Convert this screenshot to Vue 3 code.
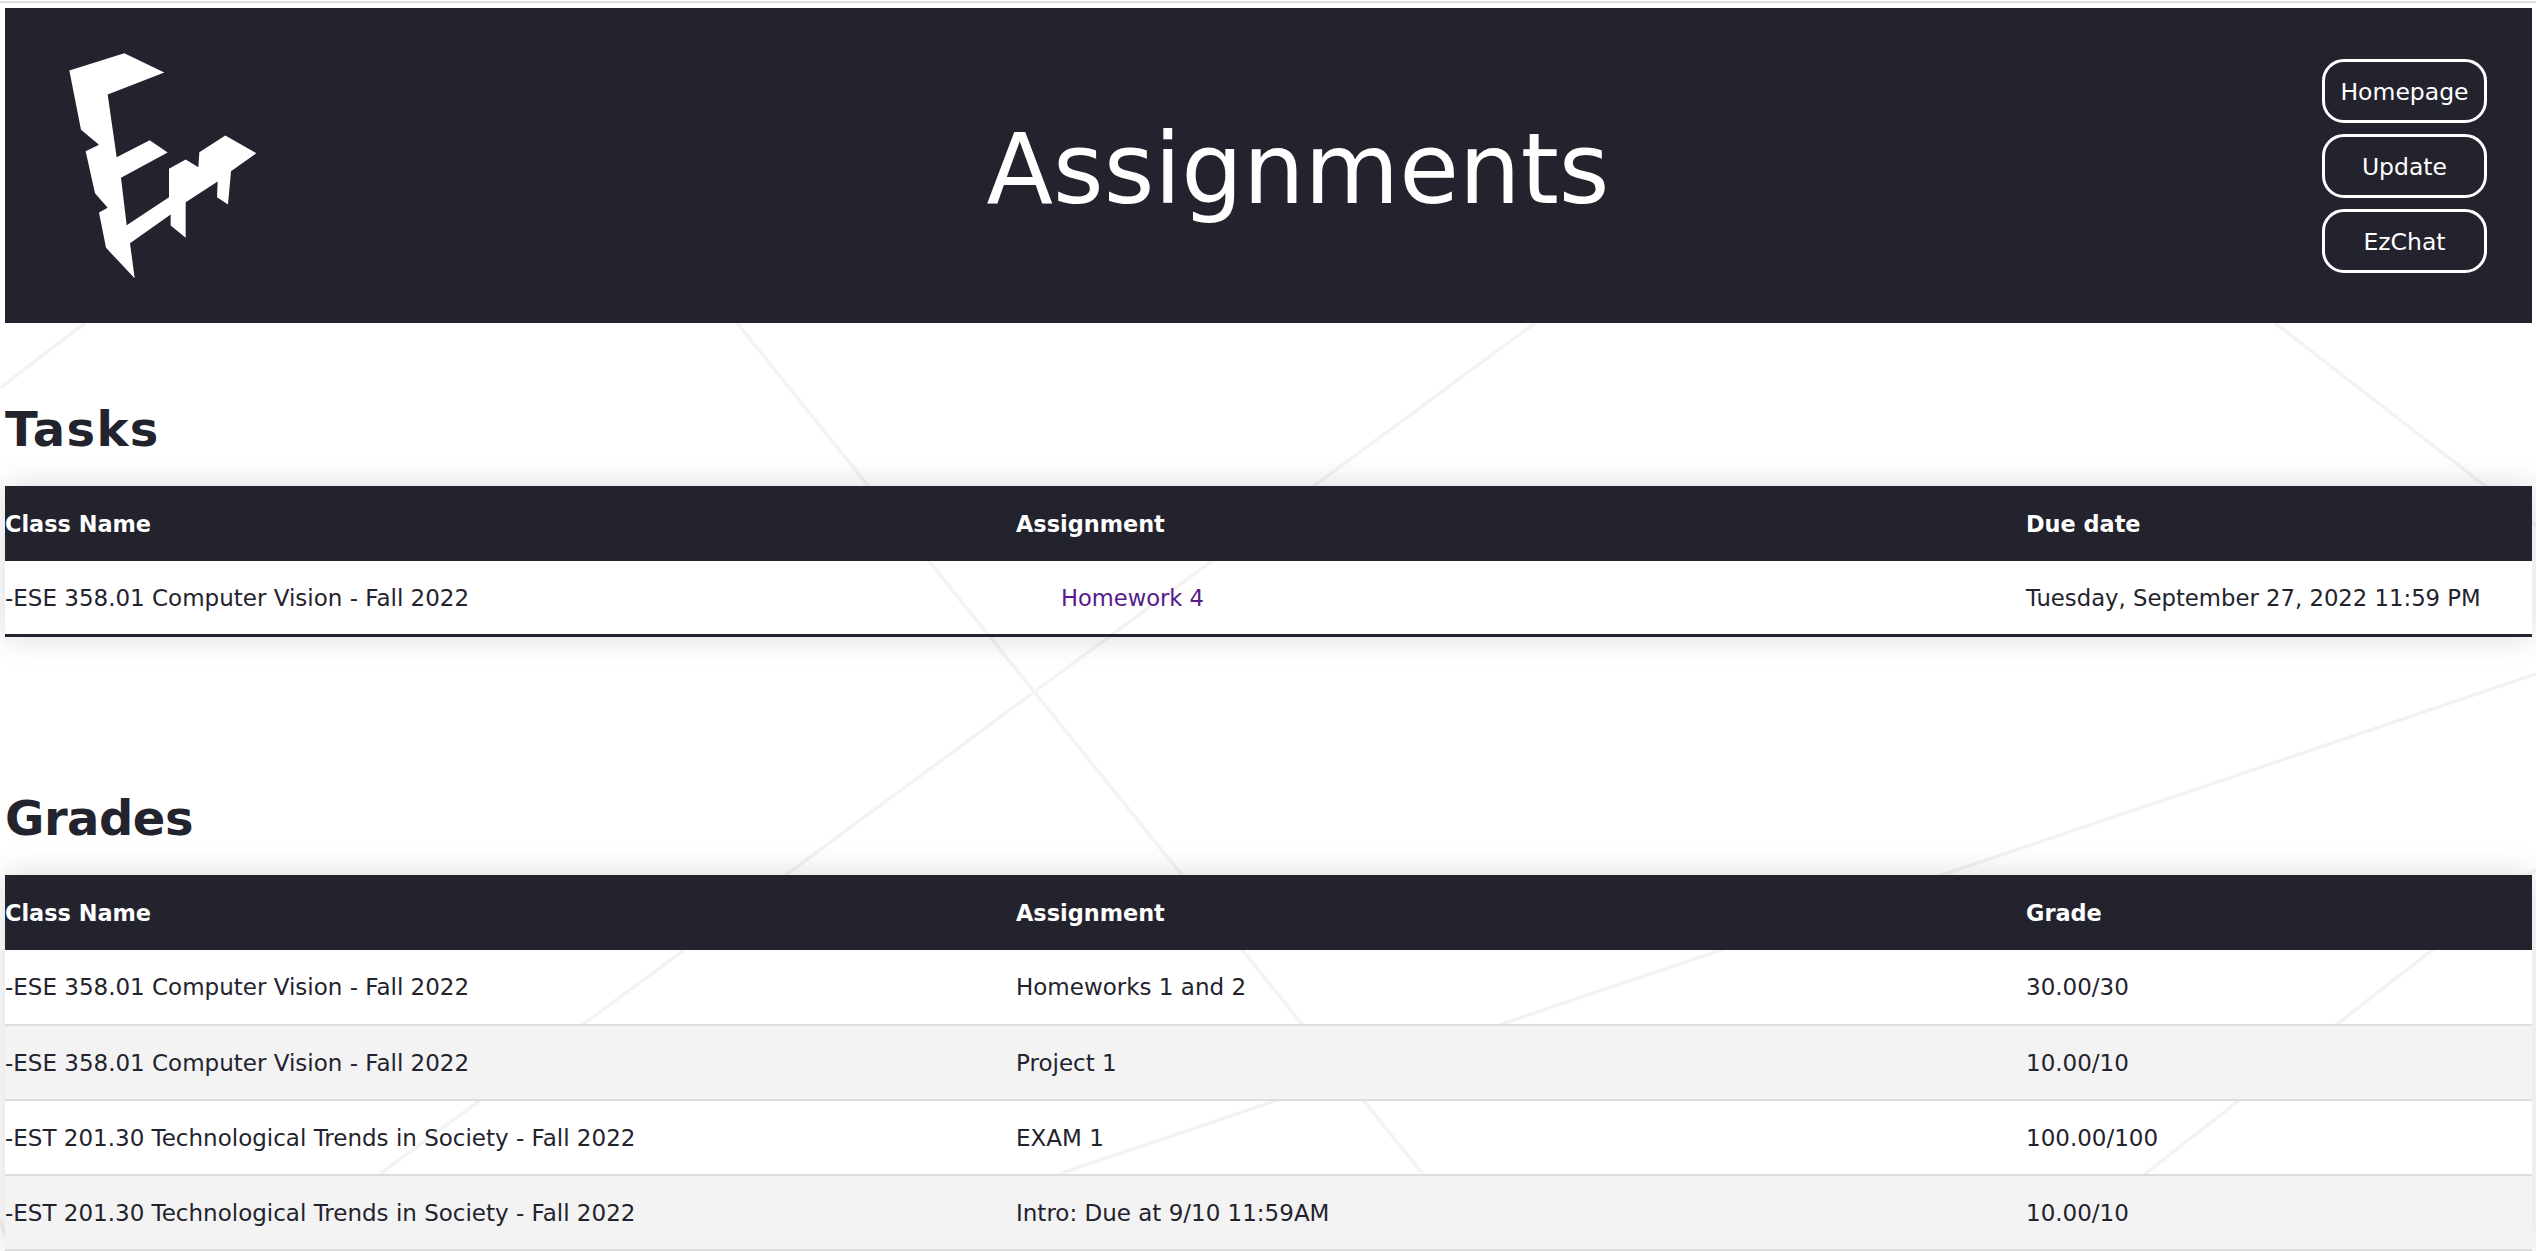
<template>
  <div class="page">
    <svg class="lines" width="2536" height="1251" viewBox="0 0 2536 1251">
      <line v-for="(l, i) in lines" :key="i" :x1="l[0]" :y1="l[1]" :x2="l[2]" :y2="l[3]" />
    </svg>

    <div class="rule"></div>

    <header class="banner">
      <div class="logo">
        <svg width="190" height="227" viewBox="200 155 570 680">
          <polygon fill="#fff" :points="logoPoints" />
        </svg>
      </div>
      <h1>Assignments</h1>
      <nav>
        <a v-for="link in links" :key="link">{{ link }}</a>
      </nav>
    </header>

    <section class="tasks">
      <h2>Tasks</h2>
      <table class="tasks-table">
        <thead>
          <tr>
            <th>Class Name</th>
            <th>Assignment</th>
            <th>Due date</th>
          </tr>
        </thead>
        <tbody>
          <tr>
            <td>-ESE 358.01 Computer Vision - Fall 2022</td>
            <td><a class="task-link">Homework 4</a></td>
            <td class="due">Tuesday, September 27, 2022 11:59 PM</td>
          </tr>
        </tbody>
      </table>
    </section>

    <section class="grades">
      <h2>Grades</h2>
      <table>
        <thead>
          <tr>
            <th>Class Name</th>
            <th>Assignment</th>
            <th>Grade</th>
          </tr>
        </thead>
        <tbody>
          <tr v-for="row in grades" :key="row[1]">
            <td>{{ row[0] }}</td>
            <td>{{ row[1] }}</td>
            <td>{{ row[2] }}</td>
          </tr>
        </tbody>
      </table>
    </section>
  </div>
</template>

<script setup>
const links = ['Homepage', 'Update', 'EzChat']

const logoPoints = '207,210 372,158 492,216 322,282 349,470 448,419 502,456 362,532 379,674 506,590 506,505 556,477 594,500 597,455 675,405 768,458 692,512 683,612 650,590 652,543 556,605 556,712 511,675 511,642 389,728 403,833 317,742 296,636 322,622 284,578 256,452 296,433 242,388'

const lines = [
  [85, 323, 0, 388],
  [737, 323, 1480, 1245],
  [1535, 323, 380, 1174],
  [2275, 323, 2560, 544],
  [2536, 674, 1059, 1174],
  [2536, 869, 2100, 1209],
  [-5, 1210, 8, 1240],
]

const ese = '-ESE 358.01 Computer Vision - Fall 2022'
const est = '-EST 201.30 Technological Trends in Society - Fall 2022'

const grades = [
  [ese, 'Homeworks 1 and 2', '30.00/30'],
  [ese, 'Project 1', '10.00/10'],
  [est, 'EXAM 1', '100.00/100'],
  [est, 'Intro: Due at 9/10 11:59AM', '10.00/10'],
]
</script>

<style>
html, body {
  background: #fff;
  overflow: hidden;
}
</style>

<style scoped>
.page {
  position: relative;
  height: 1251px;
  overflow: hidden;
  font-family: "DejaVu Sans", sans-serif;
  color: #23232e;
}

.lines {
  position: absolute;
  top: 0;
  left: 0;
}

.lines line {
  stroke: #f3f3f3;
  stroke-width: 3.5;
}

.rule {
  position: relative;
  margin-top: 1px;
  height: 2px;
  background: #ddd;
}

.banner {
  position: relative;
  display: flex;
  justify-content: space-between;
  align-items: center;
  margin: 5px 4px 0 5px;
  height: 315px;
  background: #23232e;
}

.logo {
  display: flex;
  width: 269px;
  padding-left: 62px;
  box-sizing: border-box;
}

.banner h1 {
  margin: 0;
  padding-top: 8px;
  font-size: 97.2px;
  font-weight: 400;
  color: #fff;
}

.banner nav {
  display: flex;
  flex-direction: column;
  gap: 11px;
  width: 210px;
}

.banner nav a {
  display: flex;
  align-items: center;
  justify-content: center;
  width: 165px;
  height: 64px;
  box-sizing: border-box;
  padding-top: 2px;
  border: 3px solid #fff;
  border-radius: 22px;
  font-size: 23.5px;
  color: #fff;
}

section {
  position: relative;
  margin: 0 4px 0 5px;
}

h2 {
  margin: 0 0 28px;
  font-size: 48px;
  font-weight: 700;
  line-height: 56px;
}

.tasks {
  padding-top: 78px;
}

.tasks h2 {
  margin-bottom: 29px;
  letter-spacing: 1.3px;
}

.grades {
  padding-top: 153px;
}

.grades h2 {
  margin-bottom: 29px;
  letter-spacing: -0.5px;
}

table {
  width: 2527px;
  table-layout: fixed;
  border-collapse: separate;
  border-spacing: 0;
  box-shadow: 0 0 30px rgba(0, 0, 0, 0.15);
  font-size: 23px;
}

th {
  height: 75px;
  padding: 0;
  background: #23232e;
  color: #fff;
  font-size: 22.4px;
  font-weight: 700;
  text-align: left;
}

th:nth-child(1) {
  width: 1011px;
}

th:nth-child(2) {
  width: 1010px;
}

td {
  height: 75px;
  box-sizing: border-box;
  padding: 0;
  border-bottom: 2px solid #ddd;
}

tbody tr:first-child td {
  height: 76px;
}

tbody tr:nth-child(even) td {
  background: #f3f3f3;
}

.tasks-table td {
  border-bottom: 3px solid #23232e;
}

.due {
  font-size: 22.75px;
}

.task-link {
  margin-left: 45px;
  font-size: 22.6px;
  color: #551a8b;
}
</style>
